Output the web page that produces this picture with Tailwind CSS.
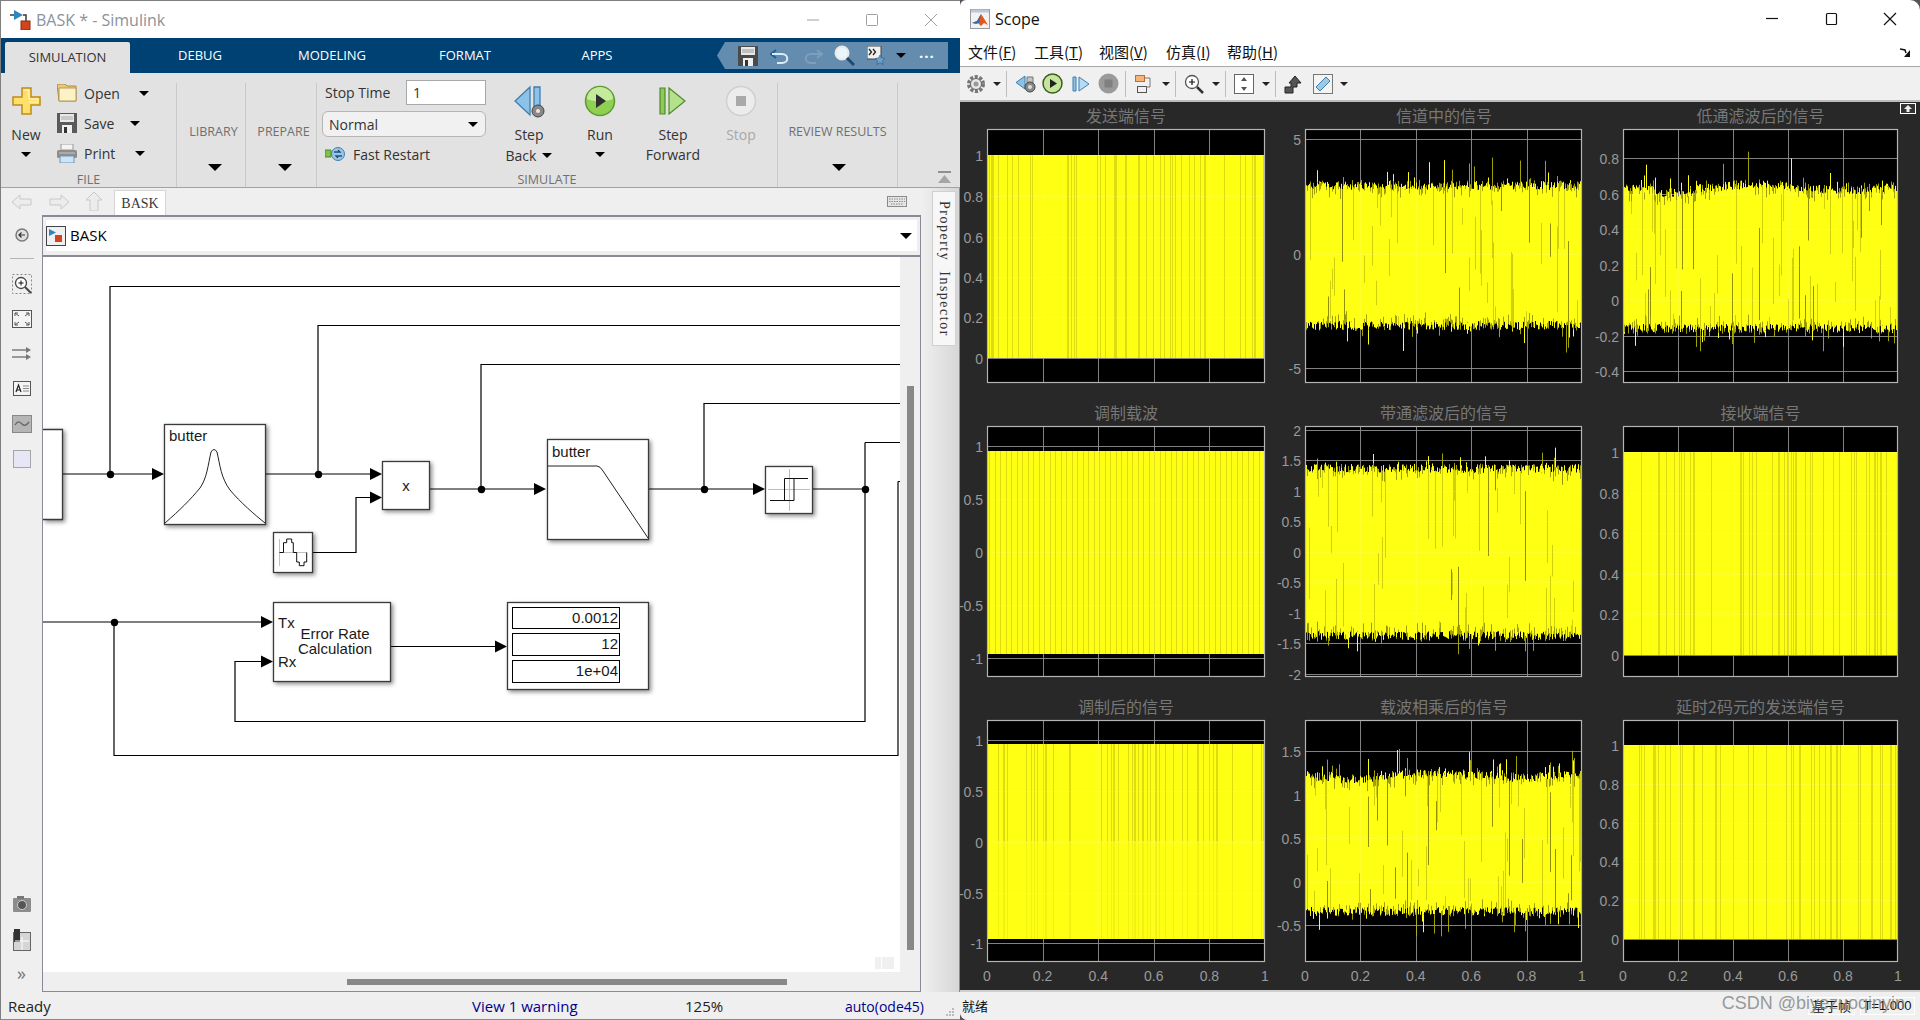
<!DOCTYPE html>
<html lang="en">
<head>
<meta charset="UTF-8" />
<title>BASK - Simulink / Scope</title>
<script src="https://cdn.jsdelivr.net/npm/@tailwindcss/browser@4"></script>
</head>
<body class="bg-[#555555] overflow-hidden font-['Open_Sans','Noto_Sans_CJK_SC',sans-serif]">
<div class="flex w-[1920px] h-[1020px]">

  <!-- simulink window -->
  <div class="flex flex-col w-[960px] h-[1020px] border-l border-t border-[#7f7f7f] bg-[#efefef]">
    <!-- title bar -->
    <div class="flex items-center h-[37px] bg-white pl-[9px] shrink-0">
      <svg class="w-[21px] h-[21px]" viewBox="0 0 21 21"><path d="M0 6h5" stroke="#3a3a3a" stroke-width="1.5"/><path d="M4 1l9 5-9 5z" fill="#2f86c1"/><path d="M13 6h3v7" stroke="#3a3a3a" fill="none" stroke-width="1.5"/><rect x="11" y="12" width="9" height="9" fill="#d2441c" stroke="#8a2c10"/></svg>
      <span class="ml-[5px] text-[16px] text-[#8a929a]">BASK * - Simulink</span>
      <div class="ml-auto flex items-center">
        <svg class="w-[58px] h-[20px]" viewBox="0 0 58 20"><path d="M0 10h12" stroke="#a0a0a0"/></svg>
        <svg class="w-[59px] h-[20px]" viewBox="0 0 59 20"><rect x="1.5" y="4.5" width="11" height="11" rx="1" fill="none" stroke="#a0a0a0"/></svg>
        <svg class="w-[36px] h-[20px] mr-[0px]" viewBox="0 0 36 20"><path d="M1 4l12 12M13 4L1 16" stroke="#a0a0a0"/></svg>
      </div>
    </div>
    <!-- tabs -->
    <div class="flex h-[35px] bg-[#004173] shrink-0 text-[13px] text-white pl-[4px]">
      <div class="flex items-center justify-center w-[125px] h-[31px] mt-[4px] bg-[#e2e2e2] rounded-t-[2px] text-[#333333]">SIMULATION</div>
      <div class="flex items-center justify-center w-[140px]">DEBUG</div>
      <div class="flex items-center justify-center w-[124px]">MODELING</div>
      <div class="flex items-center justify-center w-[142px]">FORMAT</div>
      <div class="flex items-center justify-center w-[122px]">APPS</div>
      <!-- quick access -->
      <div class="ml-auto mr-[12px] mt-[4px] flex items-center w-[231px] h-[27px] bg-[#648cae] [clip-path:polygon(8px_0,100%_0,100%_100%,8px_100%,0_50%)] pl-[21px]">
        <svg class="w-[20px] h-[20px]" viewBox="0 0 20 20"><path d="M0 0h20v20H0z" fill="#4a4a4a"/><path d="M3 1h14v8H3z" fill="#e8e8e8"/><path d="M4 4h12M4 6h12" stroke="#999"/><path d="M5 12h10v8H5z" fill="#f0f0f0"/><path d="M7 14h3v6H7z" fill="#333"/></svg>
        <svg class="w-[20px] h-[18px] ml-[12px]" viewBox="0 0 20 18"><path d="M6 3L1 7l5 4" fill="none" stroke="#1d5f95" stroke-width="2"/><path d="M2 7h10c7 0 7 9 0 9H7" fill="none" stroke="#d8ecfa" stroke-width="2"/></svg>
        <svg class="w-[20px] h-[18px] ml-[13px]" viewBox="0 0 20 18"><path d="M14 3l5 4-5 4" fill="none" stroke="#7d9fbc" stroke-width="2"/><path d="M18 7H8c-7 0-7 9 0 9h5" fill="none" stroke="#7d9fbc" stroke-width="2"/></svg>
        <svg class="w-[21px] h-[21px] ml-[11px]" viewBox="0 0 21 21"><circle cx="8" cy="8" r="6.5" fill="#eaf4fb" stroke="#e8e8e8" stroke-width="2"/><path d="M13 13l7 7" stroke="#1e4a70" stroke-width="3"/></svg>
        <svg class="w-[18px] h-[20px] ml-[12px]" viewBox="0 0 18 20"><path d="M0 0h14v13H0z" fill="#f0f0f0" stroke="#444"/><path d="M2 3l2.500 3-2.500 3M6 3l2.500 3-2.500 3" fill="none" stroke="#222" stroke-width="1.300"/><path d="M13 9l1.500 3 3.500.5-2.500 2.300.6 3.700-3.100-1.800-3.100 1.800.6-3.700L8 12.500l3.500-.5z" fill="#6ba0cc" stroke="#2c5c85" stroke-width=".6"/></svg>
        <span class="ml-[11px] w-0 h-0 border-x-[5px] border-x-transparent border-t-[5px] border-t-black"></span>
        <span class="ml-[13px] text-white text-[15px] leading-none font-bold tracking-[1px] -mt-[7px]">...</span>
      </div>
    </div>
    <!-- ribbon -->
    <div class="flex h-[115px] bg-[#e2e2e2] border-b border-[#a3a3a3] shrink-0 text-[14px] text-[#333333]">
      <!-- file -->
      <div class="flex flex-col w-[176px] mt-[10px] border-r border-[#c9c9c9]">
        <div class="flex flex-1">
          <div class="flex flex-col items-center w-[50px] pt-[4px]">
            <svg class="w-[29px] h-[28px]" viewBox="0 0 29 28"><path d="M10 1h9v9h9v8h-9v9h-9v-9H1v-8h9z" fill="#ffe06a" stroke="#c08a1a" stroke-width="1.500"/><path d="M12 3h5v9h9v3h-9" fill="none" stroke="#fff6c8"/></svg>
            <span class="mt-[10px] h-[20px] leading-[20px]">New</span>
            <span class="mt-[7px] w-0 h-0 border-x-[5px] border-x-transparent border-t-[5px] border-t-black"></span>
          </div>
          <div class="flex flex-col gap-[8px] ml-[6px] -mt-[1px]">
            <div class="flex items-center h-[22px]">
              <svg class="w-[20px] h-[18px]" viewBox="0 0 20 18"><path d="M0 0h8l2 2h9v15H2z" fill="#e9c97a" stroke="#b08a3a"/><path d="M2 4h17v13H2z" fill="#fbf2c6" stroke="#b9975a"/></svg>
              <span class="ml-[7px]">Open</span>
              <span class="ml-[19px] w-0 h-0 border-x-[5px] border-x-transparent border-t-[5px] border-t-black"></span>
            </div>
            <div class="flex items-center h-[22px]">
              <svg class="w-[20px] h-[20px]" viewBox="0 0 20 20"><path d="M0 0h20v20H0z" fill="#5a5a5a"/><path d="M3 1h14v8H3z" fill="#e8e8e8"/><path d="M4 4h12M4 6h12" stroke="#aaa"/><path d="M5 12h10v8H5z" fill="#f0f0f0"/><path d="M7 14h3v6H7z" fill="#333"/></svg>
              <span class="ml-[7px]">Save</span>
              <span class="ml-[16px] w-0 h-0 border-x-[5px] border-x-transparent border-t-[5px] border-t-black"></span>
            </div>
            <div class="flex items-center h-[22px]">
              <svg class="w-[20px] h-[19px]" viewBox="0 0 20 19"><path d="M4 0h12v6H4z" fill="#f4f4f4" stroke="#999"/><rect x="0" y="6" width="20" height="8" rx="1.500" fill="#8d8d8d"/><path d="M2 9h16" stroke="#c8c8c8"/><path d="M3 12h14v7H3z" fill="#cfe3f3" stroke="#6d94b4"/></svg>
              <span class="ml-[7px]">Print</span>
              <span class="ml-[20px] w-0 h-0 border-x-[5px] border-x-transparent border-t-[5px] border-t-black"></span>
            </div>
          </div>
        </div>
        <div class="h-[16px] leading-[18px] text-center text-[12.500px] text-[#707070]">FILE</div>
      </div>
      <!-- library -->
      <div class="flex flex-col items-center w-[69px] pl-[5px] mt-[10px] border-r border-[#c9c9c9]">
        <span class="mt-[39px] h-[20px] leading-[20px] text-[12.500px] text-[#707070]">LIBRARY</span>
        <span class="mt-[22px] ml-[3px] w-0 h-0 border-x-[7px] border-x-transparent border-t-[7px] border-t-black"></span>
      </div>
      <!-- prepare -->
      <div class="flex flex-col items-center w-[71px] pl-[5px] mt-[10px] border-r border-[#c9c9c9]">
        <span class="mt-[39px] h-[20px] leading-[20px] text-[12.500px] text-[#707070]">PREPARE</span>
        <span class="mt-[22px] ml-[3px] w-0 h-0 border-x-[7px] border-x-transparent border-t-[7px] border-t-black"></span>
      </div>
      <!-- simulate -->
      <div class="flex flex-col w-[461px] mt-[10px] border-r border-[#c9c9c9]">
        <div class="flex flex-1">
          <div class="flex flex-col w-[175px] pl-[5px]">
            <div class="flex items-center h-[25px] -mt-[3px]">
              <span class="ml-[3px] w-[81px]">Stop Time</span>
              <div class="w-[80px] h-[25px] bg-white border border-[#a9a9a9] pl-[6px] leading-[24px]">1</div>
            </div>
            <div class="flex items-center justify-between w-[164px] h-[26px] mt-[6px] bg-[#f1f1f1] border border-[#b5b5b5] rounded-[6px] px-[6px]">
              <span>Normal</span>
              <span class="mr-[1px] w-0 h-0 border-x-[5px] border-x-transparent border-t-[5px] border-t-black"></span>
            </div>
            <div class="flex items-center h-[20px] mt-[7px] ml-[3px]">
              <svg class="w-[20px] h-[16px]" viewBox="0 0 20 16"><path d="M0 4h6v7H0z" fill="#7fc04f" stroke="#4f8a2a"/><circle cx="13" cy="8" r="6.500" fill="#9cc6e4" stroke="#3f7fae"/><path d="M9 6h6l-2-2M17 10h-6l2 2" fill="none" stroke="#1f4f7a" stroke-width="1.300"/></svg>
              <span class="ml-[8px]">Fast Restart</span>
            </div>
          </div>
          <div class="flex flex-col items-center w-[74px]">
            <svg class="w-[32px] h-[36px]" viewBox="0 0 32 36"><path d="M17 4v28L2 18z" fill="#8dc2e8" stroke="#3f7fae" stroke-width="1.300"/><path d="M21 4h6v21h-6z" fill="#8dc2e8" stroke="#3f7fae" stroke-width="1.300"/><circle cx="25" cy="28" r="6" fill="#888" stroke="#444"/><circle cx="25" cy="28" r="2" fill="#e8e8e8"/></svg>
            <span class="mt-[6px] h-[20px] leading-[20px]">Step</span>
            <div class="flex items-center gap-[6px] h-[20px]"><span>Back</span><span class="w-0 h-0 border-x-[5px] border-x-transparent border-t-[5px] border-t-black"></span></div>
          </div>
          <div class="flex flex-col items-center w-[68px]">
            <svg class="w-[32px] h-[36px]" viewBox="0 0 32 36"><circle cx="16" cy="18" r="14.500" fill="#8fcf52" stroke="#5d9a32" stroke-width="1.500"/><path d="M3 16a13 12 0 0 1 26 0c-6 3-20 3-26 0z" fill="#c4ea9b"/><path d="M12 11l10 7-10 7z" fill="#2f2f2f"/></svg>
            <span class="mt-[6px] h-[20px] leading-[20px]">Run</span>
            <span class="mt-[7px] w-0 h-0 border-x-[5px] border-x-transparent border-t-[5px] border-t-black"></span>
          </div>
          <div class="flex flex-col items-center w-[78px]">
            <svg class="w-[30px] h-[36px]" viewBox="0 0 30 36"><path d="M2 5h5v26H2z" fill="#8ccb58" stroke="#4f8a2a" stroke-width="1.200"/><path d="M11 5l16 13-16 13z" fill="#b5e08c" stroke="#4f8a2a" stroke-width="1.200"/></svg>
            <span class="mt-[6px] h-[20px] leading-[20px]">Step</span>
            <span class="h-[20px] leading-[20px]">Forward</span>
          </div>
          <div class="flex flex-col items-center w-[58px]">
            <svg class="w-[32px] h-[36px]" viewBox="0 0 32 36"><circle cx="16" cy="18" r="14.500" fill="#ececec" stroke="#cfcfcf" stroke-width="1.500"/><rect x="11" y="13" width="10" height="10" fill="#a9a9a9"/></svg>
            <span class="mt-[6px] h-[20px] leading-[20px] text-[#a8a8a8]">Stop</span>
          </div>
        </div>
        <div class="h-[16px] leading-[18px] text-center text-[12.500px] text-[#707070]">SIMULATE</div>
      </div>
      <!-- review -->
      <div class="flex flex-col items-center w-[120px] mt-[10px] border-r border-[#c9c9c9]">
        <span class="mt-[39px] h-[20px] leading-[20px] text-[12.500px] text-[#707070]">REVIEW RESULTS</span>
        <span class="mt-[22px] ml-[3px] w-0 h-0 border-x-[7px] border-x-transparent border-t-[7px] border-t-black"></span>
      </div>
      <div class="flex flex-1 items-end justify-end pr-[9px] pb-[3px]">
        <svg class="w-[13px] h-[13px]" viewBox="0 0 13 13"><path d="M0 1h13" stroke="#8f8f8f" stroke-width="2"/><path d="M6.500 4L13 12H0z" fill="#a5a5a5"/></svg>
      </div>
    </div>
    <!-- body -->
    <div class="flex flex-1 min-h-0">
      <div class="flex flex-col w-[920px]">
        <!-- breadcrumb row -->
        <div class="flex items-end h-[27px] shrink-0 pl-[11px]">
          <svg class="self-center w-[20px] h-[14px]" viewBox="0 0 20 14"><path d="M0 7l8-7v4h11v6H8v4z" fill="#ececec" stroke="#c8c8c8"/></svg>
          <svg class="self-center w-[20px] h-[14px] ml-[17px]" viewBox="0 0 20 14"><path d="M20 7l-8-7v4H1v6h11v4z" fill="#ececec" stroke="#c8c8c8"/></svg>
          <svg class="self-center w-[16px] h-[19px] ml-[17px]" viewBox="0 0 16 19"><path d="M8 0l8 8h-4v11H4V8H0z" fill="#ececec" stroke="#c8c8c8"/></svg>
          <div class="ml-[12px] flex items-center justify-center w-[52px] h-[25px] bg-white border-x border-t border-[#d6d6d6] text-[14px] text-[#3a3a3a] font-['Liberation_Serif',serif]">BASK</div>
          <svg class="self-center w-[20px] h-[11px] ml-auto mr-[14px]" viewBox="0 0 20 11"><rect x=".5" y=".5" width="19" height="10" fill="#e5e5e5" stroke="#8a8a8a"/><path d="M2 3h16M2 5.500h16M4 8h12" stroke="#8a8a8a" stroke-dasharray="1.500 1"/></svg>
        </div>
        <div class="flex flex-1 min-h-0">
          <!-- left toolbar -->
          <div class="flex flex-col items-center w-[41px] shrink-0">
            <div class="flex items-center justify-center h-[40px] w-full"><svg class="w-[14px] h-[14px]" viewBox="0 0 14 14"><circle cx="7" cy="7" r="6" fill="#e0e0e0" stroke="#7a7a7a" stroke-width="1.500"/><path d="M10 7H4m2.500-2.500L4 7l2.500 2.500" fill="none" stroke="#333" stroke-width="1.200"/></svg></div>
            <div class="w-[24px] border-t border-[#b5b5b5] mt-[3px] mb-[7px]"></div>
            <div class="flex items-center justify-center h-[35px] w-full"><svg class="w-[20px] h-[20px]" viewBox="0 0 20 20"><rect x=".5" y=".5" width="19" height="19" fill="none" stroke="#888" stroke-dasharray="2 2"/><circle cx="9" cy="9" r="5.500" fill="#fff" stroke="#444" stroke-width="1.300"/><path d="M9 6.500v5M6.500 9h5" stroke="#111"/><path d="M13 13l6 6" stroke="#444" stroke-width="2"/></svg></div>
            <div class="flex items-center justify-center h-[35px] w-full"><svg class="w-[20px] h-[18px]" viewBox="0 0 20 18"><rect x=".5" y=".5" width="19" height="17" fill="#f4f4f4" stroke="#555"/><path d="M3 6V3h3M17 6V3h-3M3 12v3h3M17 12v3h-3M3 3l4 3M17 3l-4 3M3 15l4-3M17 15l-4-3" fill="none" stroke="#555"/></svg></div>
            <div class="flex items-center justify-center h-[35px] w-full"><svg class="w-[20px] h-[14px]" viewBox="0 0 20 14"><path d="M0 3h17M0 10h17" stroke="#444" stroke-width="1.200"/><path d="M14 0l5 3-5 3zM14 7l5 3-5 3z" fill="#777"/></svg></div>
            <div class="flex items-center justify-center h-[35px] w-full"><svg class="w-[18px] h-[15px]" viewBox="0 0 18 15"><rect x=".5" y=".5" width="17" height="14" fill="#f4f4f4" stroke="#555"/><path d="M3 11l2.500-7L8 11M4 9h3" fill="none" stroke="#222" stroke-width="1.200"/><path d="M10 5h6M10 7.500h6M10 10h6" stroke="#888"/></svg></div>
            <div class="flex items-center justify-center h-[35px] w-full"><svg class="w-[20px] h-[18px]" viewBox="0 0 20 18"><rect x=".5" y=".5" width="19" height="17" fill="#b5b5b5" stroke="#888"/><path d="M3 10c3-5 5-3 7-1s4 2 7-2" fill="none" stroke="#666" stroke-width="1.300"/></svg></div>
            <div class="flex items-center justify-center h-[35px] w-full"><svg class="w-[18px] h-[18px]" viewBox="0 0 18 18"><rect x=".5" y=".5" width="17" height="17" fill="#e6e6f6" stroke="#a5a5a5"/></svg></div>
            <svg class="w-[20px] h-[18px] mt-auto" viewBox="0 0 20 18"><rect x="1" y="3" width="18" height="14" rx="1" fill="#8c8c8c"/><rect x="5" y="1" width="7" height="3" fill="#777"/><circle cx="10" cy="10" r="4.500" fill="#555" stroke="#ccc"/></svg>
            <svg class="w-[18px] h-[22px] mt-[16px]" viewBox="0 0 18 22"><rect x=".5" y="3.500" width="17" height="18" fill="#d5d5d5" stroke="#666"/><rect x="1" y="0" width="6" height="13" fill="#333"/><path d="M2 12h14M9 8v13" stroke="#fff"/></svg>
            <span class="mt-[13px] mb-[10px] text-[18px] leading-[18px] text-[#777777]">»</span>
          </div>
          <!-- diagram panel -->
          <div class="relative flex flex-col flex-1 border-l border-r border-b border-[#8a8a96]">
            <div class="h-[42px] shrink-0 border-t-2 border-b-2 border-t-[#8a8a96] border-b-[#8a8a96] px-[3px] pt-[3px]">
              <div class="flex items-center h-[31px] bg-white">
                <svg class="w-[20px] h-[20px] ml-[0px]" viewBox="0 0 20 20"><rect x=".5" y=".5" width="19" height="19" fill="#f0f0f0" stroke="#444"/><path d="M3 3l7 3.500L3 10z" fill="#2f86c1"/><rect x="9" y="9" width="7" height="7" fill="#d2441c"/></svg>
                <span class="ml-[4px] text-[15px] text-black">BASK</span>
                <span class="ml-auto mr-[5px] w-0 h-0 border-x-[6px] border-x-transparent border-t-[6px] border-t-black"></span>
              </div>
            </div>
            <div class="relative flex-1">
              <svg class="block w-[857px] h-[715px] bg-white" viewBox="43 257 857 715" fill="none" stroke="#000" stroke-width="1.200">
                <!-- wires -->
                <path d="M62 474H152M110 474V286.500H900M266 474H370M318 474V325.500H900M313 552.500H356V497.500H370M430 489H534M481 489V364.500H900M649 489H753M704 489V403.500H900M813 489H865M865 442.500H900M865 442.500V721.500H235V661.500H261M898 481.500H900M898 481.500V755.500H114V622M43 622H261M391 646.500H495"/>
                <!-- arrows -->
                <g fill="#000" stroke="none">
                  <path d="M152 468l12 6-12 6zM370 468l12 6-12 6zM370 491.500l12 6-12 6zM534 483l12 6-12 6zM753 483l12 6-12 6zM261 616l12 6-12 6zM261 655.500l12 6-12 6zM495 640.500l12 6-12 6z"/>
                  <circle cx="110.500" cy="474.500" r="3.700"/><circle cx="318.500" cy="474.500" r="3.700"/><circle cx="481.500" cy="489.500" r="3.700"/><circle cx="704.500" cy="489.500" r="3.700"/><circle cx="865.500" cy="489.500" r="3.700"/><circle cx="114.500" cy="622.500" r="3.700"/>
                </g>
                <!-- blocks -->
                <g fill="#fff" stroke="#3a3a3a" stroke-width="1.300" class="drop-shadow-[2px_2px_2px_rgba(0,0,0,0.45)]">
                  <path d="M43 429.500H62.500V519.500H43"/>
                  <rect x="164.500" y="424.500" width="101" height="100"/>
                  <rect x="382.500" y="461.500" width="47" height="48"/>
                  <rect x="273.500" y="532.500" width="39" height="40"/>
                  <rect x="547.500" y="439.500" width="101" height="100"/>
                  <rect x="765.500" y="466.500" width="47" height="47"/>
                  <rect x="273.500" y="602.500" width="117" height="79"/>
                  <rect x="507.500" y="602.500" width="141" height="87"/>
                </g>
                <!-- block icons -->
                <path d="M165 523C180 510 190 500 200 488C207 478 208 465 211 452Q214 447 217 452C220 465 221 478 230 490C240 502 255 515 265 523" stroke="#222" stroke-width="1"/>
                <path d="M548 466H597Q600 466 603 471L648 538" stroke="#222" stroke-width="1"/>
                <path d="M279.500 539V566M279.500 552.500H307" stroke="#c0c0c0" stroke-width="1"/>
                <path d="M279.500 552.500H283.500V542.700H286.700V539H291.700V542.700H293.300V552.500H296.700V562H299.300V565.700H304V562H306.700V552.500" stroke="#111" stroke-width="1"/>
                <path d="M789.500 469V511M768 489.500H810" stroke="#bdbdbd" stroke-width="1"/>
                <path d="M770 500.500H794V478.500H808M784.500 500.500V478.500H794" stroke="#111" stroke-width="1"/>
                <!-- display cells -->
                <g stroke="#000" stroke-width="1"><rect x="512.500" y="607.500" width="107" height="21"/><rect x="512.500" y="633.500" width="107" height="22"/><rect x="512.500" y="660.500" width="107" height="22"/></g>
                <!-- labels -->
                <g fill="#1a1a1a" stroke="none" class="font-['Liberation_Sans',sans-serif] text-[15px]">
                  <text x="169" y="441">butter</text>
                  <text x="552" y="457">butter</text>
                  <text x="406" y="491" text-anchor="middle">x</text>
                  <text x="278" y="628">Tx</text>
                  <text x="278" y="667">Rx</text>
                  <text x="335" y="639" text-anchor="middle">Error Rate</text>
                  <text x="335" y="654" text-anchor="middle">Calculation</text>
                  <text x="618" y="623" text-anchor="end">0.0012</text>
                  <text x="618" y="649" text-anchor="end">12</text>
                  <text x="618" y="676" text-anchor="end">1e+04</text>
                </g>
              </svg>
              <!-- grip and scrollbars sit over the canvas frame -->
              <div class="absolute left-[832px] top-[700px] flex gap-[1px]"><span class="w-[6px] h-[12px] bg-[#f0f0f0]"></span><span class="w-[12px] h-[12px] bg-[#f0f0f0]"></span></div>
              <div class="absolute left-[864px] top-[129px] w-[7px] h-[564px] bg-[#888888]"></div>
              <div class="absolute left-[304px] top-[722px] w-[440px] h-[6px] bg-[#888888]"></div>
            </div>
          </div>
        </div>
      </div>
      <!-- property inspector strip -->
      <div class="flex flex-1 bg-gradient-to-r from-[#f0f0f0] to-[#d6d6d6] pl-[11px] pr-[2px] pt-[3px] border-r border-[#8a8a8a]">
        <div class="flex justify-center w-[24px] h-[155px] bg-[#f7f7f7] border border-[#d0d0d0] text-[14px] text-[#333333] font-['Liberation_Serif',serif] [writing-mode:vertical-rl] tracking-[1.5px] whitespace-pre">Property  Inspector</div>
      </div>
    </div>
    <!-- status bar -->
    <div class="flex items-center h-[28px] shrink-0 pl-[7px] pt-[1px] text-[15px] text-[#222222] border-b border-[#8a8a8a]">
      <span class="w-[464px]">Ready</span>
      <span class="w-[213px] text-[#00008b]">View 1 warning</span>
      <span class="w-[160px]">125%</span>
      <span class="w-[96px] text-[14px] text-[#00008b]">auto(ode45)</span>
      <svg class="ml-[4px] self-end mb-[2px] w-[10px] h-[10px]" viewBox="0 0 10 10"><path d="M7 1h2v2H7zM4 4h2v2H4zM7 4h2v2H7zM1 7h2v2H1zM4 7h2v2H4zM7 7h2v2H7z" fill="#bbbbbb"/></svg>
    </div>
  </div>

  <!-- scope window -->
  <div class="relative flex flex-col w-[960px] h-[1020px] bg-white rounded-tl-[6px] rounded-tr-[10px] rounded-bl-[8px] overflow-hidden font-['Noto_Sans_CJK_SC','Open_Sans',sans-serif]">
    <div class="flex items-center h-[38px] shrink-0 pl-[10px]">
      <svg class="w-[20px] h-[20px]" viewBox="0 0 20 20"><rect x=".5" y=".5" width="19" height="19" fill="#f2f2f2" stroke="#9a9a9a"/><path d="M1 .5h18v3H1z" fill="#b9c7d6"/><path d="M2 14l5-2 4-7 2 3 5 8-4-2-3 3-3-3z" fill="#e2591b"/><path d="M2 14l5-2 4-7-2 9-3 1z" fill="#2f6fb0"/></svg>
      <span class="ml-[5px] text-[16px] text-[#111111] font-['Open_Sans',sans-serif]">Scope</span>
      <div class="ml-auto flex items-center">
        <svg class="w-[59px] h-[20px]" viewBox="0 0 59 20"><path d="M0 9.500h12" stroke="#111" stroke-width="1.200"/></svg>
        <svg class="w-[58px] h-[20px]" viewBox="0 0 58 20"><rect x="1.500" y="4.500" width="10" height="11" rx="1" fill="none" stroke="#111" stroke-width="1.200"/></svg>
        <svg class="w-[37px] h-[20px]" viewBox="0 0 37 20"><path d="M1 4l12 12M13 4L1 16" stroke="#111" stroke-width="1.200"/></svg>
      </div>
    </div>
    <!-- menu -->
    <div class="flex items-center h-[29px] shrink-0 pl-[8px] text-[15px] text-[#111111] border-b border-[#a8a8a8]">
      <span class="w-[66px]">文件(<span class="underline">F</span>)</span>
      <span class="w-[65px]">工具(<span class="underline">T</span>)</span>
      <span class="w-[67px]">视图(<span class="underline">V</span>)</span>
      <span class="w-[61px]">仿真(<span class="underline">I</span>)</span>
      <span>帮助(<span class="underline">H</span>)</span>
      <svg class="ml-auto mr-[9px] w-[11px] h-[9px]" viewBox="0 0 11 9"><path d="M0 1l5 1 1 3" fill="none" stroke="#111" stroke-width="1.500"/><path d="M10 2v7H4z" fill="#111"/></svg>
    </div>
    <!-- toolbar -->
    <div class="flex items-center h-[35px] shrink-0 pl-[6px] bg-[#f0f0f0] border-b-2 border-[#bcbcbc]">
      <svg class="w-[20px] h-[20px]" viewBox="0 0 20 20"><circle cx="10" cy="10" r="7" fill="none" stroke="#777" stroke-width="4" stroke-dasharray="3 1.500"/><circle cx="10" cy="10" r="5.500" fill="#e8e8e8" stroke="#666"/><circle cx="10" cy="10" r="2.500" fill="#999"/></svg>
      <span class="ml-[7px] w-0 h-0 border-x-[4px] border-x-transparent border-t-[4px] border-t-[#222222]"></span>
      <span class="ml-[5px] h-[26px] border-l border-[#bdbdbd]"></span>
      <svg class="ml-[8px] w-[22px] h-[20px]" viewBox="0 0 22 20"><path d="M10 2v13L1 8.500z" fill="#8dc2e8" stroke="#3f7fae"/><path d="M12 3h6v9h-6z" fill="#c4c4c4" stroke="#777"/><circle cx="15" cy="13" r="5" fill="#888" stroke="#444"/><circle cx="15" cy="13" r="2" fill="#ddd"/></svg>
      <svg class="ml-[5px] w-[21px] h-[21px]" viewBox="0 0 21 21"><circle cx="10.500" cy="10.500" r="9.500" fill="#c6e59c" stroke="#3d5c22" stroke-width="1.500"/><path d="M8 6l7 4.500L8 15z" fill="#222"/></svg>
      <svg class="ml-[9px] w-[18px] h-[18px]" viewBox="0 0 18 18"><path d="M1 2h3v14H1z" fill="#8dc2e8" stroke="#3f7fae"/><path d="M7 2l10 7-10 7z" fill="#b5dcf5" stroke="#3f7fae"/></svg>
      <svg class="ml-[8px] w-[21px] h-[21px]" viewBox="0 0 21 21"><circle cx="10.500" cy="10.500" r="10" fill="#9a9a9a"/><rect x="6.500" y="6.500" width="8" height="8" fill="#808080"/></svg>
      <span class="ml-[6px] h-[26px] border-l border-[#bdbdbd]"></span>
      <svg class="ml-[8px] w-[20px] h-[20px]" viewBox="0 0 20 20"><rect x="1.500" y="1.500" width="9" height="6" fill="#f3b57a" stroke="#d2691e"/><rect x="3.500" y="12.500" width="9" height="6" fill="#f0f0f0" stroke="#555"/><path d="M10 4h6v6M16 10v3H12" fill="none" stroke="#777"/></svg>
      <span class="ml-[8px] w-0 h-0 border-x-[4px] border-x-transparent border-t-[4px] border-t-[#222222]"></span>
      <span class="ml-[5px] h-[26px] border-l border-[#bdbdbd]"></span>
      <svg class="ml-[8px] w-[20px] h-[20px]" viewBox="0 0 20 20"><circle cx="8" cy="8" r="6.500" fill="#fff" stroke="#555" stroke-width="1.300"/><path d="M8 5v6M5 8h6" stroke="#111" stroke-width="1.200"/><path d="M13 13l6 6" stroke="#333" stroke-width="2.500"/></svg>
      <span class="ml-[8px] w-0 h-0 border-x-[4px] border-x-transparent border-t-[4px] border-t-[#222222]"></span>
      <span class="ml-[5px] h-[26px] border-l border-[#bdbdbd]"></span>
      <svg class="ml-[8px] w-[20px] h-[20px]" viewBox="0 0 20 20"><rect x=".5" y=".5" width="19" height="19" fill="#fff" stroke="#666"/><path d="M10 3l3 4H7zM10 17l3-4H7z" fill="#555"/></svg>
      <span class="ml-[8px] w-0 h-0 border-x-[4px] border-x-transparent border-t-[4px] border-t-[#222222]"></span>
      <span class="ml-[5px] h-[26px] border-l border-[#bdbdbd]"></span>
      <svg class="ml-[8px] w-[18px] h-[20px]" viewBox="0 0 18 20"><path d="M1 19v-6h6V9h-2L11 2l6 7h-4v4H9v6z" fill="#555" stroke="#222"/></svg>
      <svg class="ml-[11px] w-[20px] h-[20px]" viewBox="0 0 20 20"><rect x=".5" y=".5" width="19" height="19" fill="#f4f4f4" stroke="#777"/><path d="M3 13L13 3l4 4L7 17z" fill="#9cc9e6" stroke="#3f7fae"/></svg>
      <span class="ml-[7px] w-0 h-0 border-x-[4px] border-x-transparent border-t-[4px] border-t-[#222222]"></span>
    </div>
    <!-- plots -->
    <div id="plots" class="relative grid grid-cols-[278px_278px_275px] grid-rows-[278px_275px_266px] gap-x-[40px] gap-y-[19px] h-[888px] shrink-0 bg-[#282828] pl-[27px] pt-[3px]">
      <div class="absolute top-[1px] right-[4px] flex items-center justify-center w-[16px] h-[11px] border border-white bg-[#333333]"><svg class="w-[10px] h-[7px]" viewBox="0 0 10 7"><path d="M5 0l4 4H6.500v3h-3V4H1z" fill="#eee"/></svg></div>
    </div>
    <!-- status -->
    <div class="flex items-center flex-1 bg-[#f0f0f0] pl-[2px] text-[13px] text-[#111111] border-t-2 border-[#cfcfcf]">
      <span>就绪</span>
      <span class="ml-auto flex items-center justify-center w-[47px] h-[18px] border border-white">基于帧</span>
      <span class="ml-[5px] mr-[5px] flex items-center justify-center w-[55px] h-[18px] border border-white font-['Liberation_Sans',sans-serif]">T=1.000</span>
    </div>
    <!-- watermark lies over the status bar -->
    <span class="absolute right-[15px] bottom-[5px] text-[18px] leading-[24px] text-[#808080]/80 font-['Liberation_Sans',sans-serif]">CSDN @biyezuoqinyin</span>
  </div>
</div>

<script>
  // scope traces: seeded noise so every render looks the same
  let seed = 12345
  const rnd = () => {
    seed = (seed * 1664525 + 1013904223) % 4294967296
    return seed / 4294967296
  }

  const x_labels = ["0", "0.2", "0.4", "0.6", "0.8", "1"]

  const plots = [
    { title: "发送端信号", w: 278, h: 254, ticks: [["1", 26], ["0.8", 67], ["0.6", 108], ["0.4", 148], ["0.2", 188], ["0", 229]], band: [26, 229], stripes: 50 },
    { title: "信道中的信号", w: 277, h: 254, ticks: [["5", 10], ["0", 125], ["-5", 239]], band: [61, 192], spike: [26, 226] },
    { title: "低通滤波后的信号", w: 275, h: 254, ticks: [["0.8", 29], ["0.6", 65], ["0.4", 100], ["0.2", 136], ["0", 171], ["-0.2", 207], ["-0.4", 242]], band: [63, 195], spike: [27, 226], wander: 6 },
    { title: "调制载波", w: 278, h: 251, ticks: [["1", 20], ["0.5", 73], ["0", 126], ["-0.5", 179], ["-1", 232]], band: [25, 228], regular: 5.5 },
    { title: "带通滤波后的信号", w: 277, h: 251, ticks: [["2", 4], ["1.5", 34], ["1", 65], ["0.5", 95], ["0", 126], ["-0.5", 156], ["-1", 187], ["-1.5", 217], ["-2", 248]], band: [47, 205], spike: [25, 227] },
    { title: "接收端信号", w: 275, h: 251, ticks: [["1", 26], ["0.8", 67], ["0.6", 107], ["0.4", 148], ["0.2", 188], ["0", 229]], band: [26, 229], stripes: 50 },
    { title: "调制后的信号", w: 278, h: 242, ticks: [["1", 20], ["0.5", 71], ["0", 122], ["-0.5", 173], ["-1", 223]], band: [24, 219], stripes: 50, half: true, xl: true },
    { title: "载波相乘后的信号", w: 277, h: 242, ticks: [["1.5", 31], ["1", 75], ["0.5", 118], ["0", 162], ["-0.5", 205]], band: [60, 187], spike: [25, 218], wander: 4, xl: true },
    { title: "延时2码元的发送端信号", w: 275, h: 242, ticks: [["1", 25], ["0.8", 64], ["0.6", 103], ["0.4", 141], ["0.2", 180], ["0", 219]], band: [25, 219], stripes: 50, xl: true },
  ]

  function trace(p) {
    const [top, bottom] = p.band
    let out = ""
    if (!p.spike) {
      out += `<rect x="0" y="${top}" width="${p.w}" height="${bottom - top}" fill="#ffff14"/>`
      let lines = ""
      let faint = ""
      if (p.regular) {
        for (let x = 2; x < p.w; x += p.regular) lines += `M${Math.round(x) + 0.5} ${top}V${bottom}`
      } else {
        for (let i = 0; i < p.stripes; i++) {
          const x = Math.round(rnd() * p.w) + 0.5
          lines += `M${x} ${top}V${p.half ? (top + bottom) / 2 : bottom}`
          if (p.half) faint += `M${x} ${(top + bottom) / 2}V${bottom}`
        }
      }
      out += `<path d="${lines}" stroke="#dcdc10" stroke-width="1" fill="none"/>`
      out += `<path d="${faint}" stroke="#f2f212" stroke-width="1" fill="none"/>`
      return out
    }
    let yellow = ""
    let olive = ""
    let inner = ""
    let dark = ""
    for (let x = 0; x < p.w; x++) {
      const drift = p.wander ? Math.sin(x / 28) * p.wander * 0.5 + (x > 30 && x < 70 ? p.wander * 0.5 : 0) : 0
      let t = p.band[0] + drift - rnd() * 9
      let b = p.band[1] + rnd() * 9
      let tip = t
      let tail = b
      if (rnd() < 0.16) tip = t - rnd() * rnd() * (p.band[0] - p.spike[0])
      if (rnd() < 0.16) tail = b + rnd() * rnd() * (p.spike[1] - p.band[1])
      const px = x + 0.5
      yellow += `M${px} ${t}V${b}`
      if (tip < t) (rnd() < 0.5 ? yellow += `M${px} ${tip}V${t}` : olive += `M${px} ${tip}V${t}`)
      if (tail > b) (rnd() < 0.5 ? yellow += `M${px} ${b}V${tail}` : olive += `M${px} ${b}V${tail}`)
      if (rnd() < 0.35) olive += `M${px} ${t - 1}V${t + rnd() * 10}`
      if (rnd() < 0.35) olive += `M${px} ${b + 1}V${b - rnd() * 10}`
      if (rnd() < 0.2) {
        // thin drop-outs run into the band from either edge or float inside it
        const span = p.band[1] - p.band[0]
        const kind = rnd()
        const from = kind < 0.35 ? t : kind < 0.7 ? b - 80 * rnd() : p.band[0] + rnd() * span * 0.8
        const end = Math.min(from + 15 + rnd() * 80, b)
        const line = `M${px} ${from}V${end}`
        if (rnd() < 0.25) dark += line
        else inner += line
      }
    }
    out += `<path d="${yellow}" stroke="#ffff14" stroke-width="1" fill="none"/>`
    out += `<path d="${inner}" stroke="#cfcf0c" stroke-width="1" fill="none"/>`
    out += `<path d="${dark}" stroke="#8f8f00" stroke-width="1" fill="none"/>`
    out += `<path d="${olive}" stroke="#a0a000" stroke-width="1" fill="none"/>`
    return out
  }

  const box = document.querySelector("#plots")
  plots.forEach((p) => {
    const gx = [0.2, 0.4, 0.6, 0.8].map((f) => Math.round(p.w * f) + 0.5)
    const grid_v = gx.map((x) => `M${x} 0V${p.h}`).join("")
    const grid_h = p.ticks.map((t) => `M0 ${t[1] + 0.5}H${p.w}`).join("")
    const y_text = p.ticks.map((t) => `<text x="-4" y="${t[1] + 6}" text-anchor="end">${t[0]}</text>`).join("")
    const x_text = !p.xl ? "" : x_labels
      .map((l, i) => `<text x="${(p.w * i) / 5}" y="${p.h + 19}" text-anchor="middle">${l}</text>`)
      .join("")
    box.insertAdjacentHTML(
      "beforeend",
      `
      <div class="flex flex-col">
        <div class="h-[24px] leading-[21px] text-center whitespace-nowrap text-[16px] text-[#777777]">${p.title}</div>
        <svg class="block overflow-visible font-['Liberation_Sans',sans-serif] text-[14px] fill-[#9a9a9a]" width="${p.w}" height="${p.h}" viewBox="0 0 ${p.w} ${p.h}">
          <rect width="${p.w}" height="${p.h}" fill="#000"/>
          <path d="${grid_v}${grid_h}" stroke="#707070" stroke-width="1" fill="none"/>
          ${trace(p)}
          <path d="${grid_v}${grid_h}" stroke="#ffffff" stroke-opacity="0.12" stroke-width="1" fill="none"/>
          <rect x="0.5" y="0.5" width="${p.w - 1}" height="${p.h - 1}" fill="none" stroke="#b4b4b4" stroke-width="1.2"/>
          ${y_text}${x_text}
        </svg>
      </div>
      `
    )
  })
</script>
</body>
</html>
